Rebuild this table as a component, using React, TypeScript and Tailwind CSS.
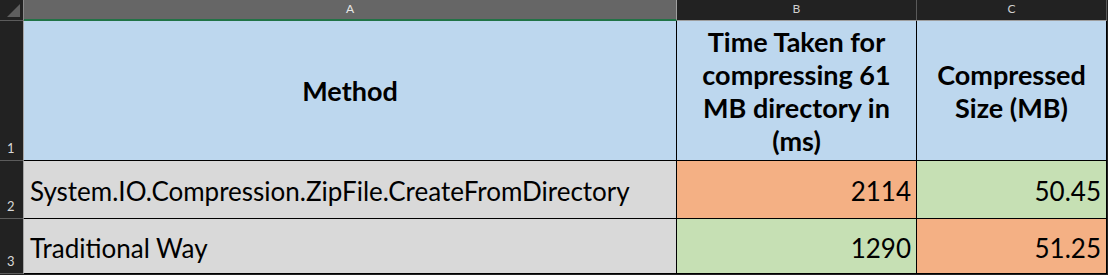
const ColHead = ({ label, active, className }: { label: string; active?: boolean; className?: string }) => (
  <div
    className={`flex h-[21px] items-center justify-center text-[12px] ${
      active ? "bg-[#666666] text-[#e6e6e6] border-b-2 border-[#217346]" : "bg-[#222222] text-[#d0d0d0] border-b border-[#9e9e9e] pb-px"
    } ${className ?? ""}`}
  >
    <span className="-mt-0.5">{label}</span>
  </div>
);

const RowHead = ({ n, h }: { n: number; h: string }) => (
  <div className={`${h} flex items-end border-b border-[#5c5c5c] border-r border-r-[#a6a6a6] bg-[#222222] pb-0.5 pl-[7px] text-[13px] text-[#d8d8d8]`}>
    {n}
  </div>
);

const head = "flex h-[140px] items-center justify-center border-b border-r border-black bg-[#BDD7EE] text-center text-[27px] leading-[33px] font-bold text-black";
const cell = "flex items-center border-b border-r border-black pt-1 text-[26px] text-black";

export default function App() {
  return (
    <div className="h-[275px] w-[1108px] overflow-hidden bg-[#222222] font-['Segoe_UI','Noto_Sans',sans-serif]">
      <div className="grid grid-cols-[24px_653px_240px_190px] font-['Lato','Open_Sans',sans-serif]">
        {/* column headers */}
        <div className="flex h-[21px] items-end justify-end border-b border-r border-[#8a8a8a] border-b-[#5c5c5c] bg-[#222222] pr-[3px] pb-[3px]">
          <svg width="13" height="13" viewBox="0 0 13 13">
            <polygon points="13,0 13,13 0,13" fill="#5f5f5f" />
          </svg>
        </div>
        <ColHead label="A" active className="border-r border-r-[#a0a0a0]" />
        <ColHead label="B" className="border-r border-r-[#5a5a5a]" />
        <ColHead label="C" className="border-r border-r-[#5a5a5a]" />

        {/* row 1 */}
        <RowHead n={1} h="h-[140px]" />
        <div className={head}>Method</div>
        <div className={head}>
          <div>
            Time Taken for
            <br />
            compressing 61
            <br />
            MB directory in
            <br />
            (ms)
          </div>
        </div>
        <div className={head}>
          <div className="mt-px">
            Compressed
            <br />
            Size (MB)
          </div>
        </div>

        {/* row 2 */}
        <RowHead n={2} h="h-[58px]" />
        <div className={`${cell} h-[58px] bg-[#D9D9D9] pl-[6px]`}>System.IO.Compression.ZipFile.CreateFromDirectory</div>
        <div className={`${cell} h-[58px] justify-end bg-[#F4B084] pr-[5px]`}>2114</div>
        <div className={`${cell} h-[58px] justify-end bg-[#C6E0B4] pr-[5px]`}>50.45</div>

        {/* row 3 */}
        <RowHead n={3} h="h-[55px]" />
        <div className={`${cell} h-[55px] bg-[#D9D9D9] pl-[6px]`}>Traditional Way</div>
        <div className={`${cell} h-[55px] justify-end bg-[#C6E0B4] pr-[5px]`}>1290</div>
        <div className={`${cell} h-[55px] justify-end bg-[#F4B084] pr-[5px]`}>51.25</div>
      </div>
    </div>
  );
}
